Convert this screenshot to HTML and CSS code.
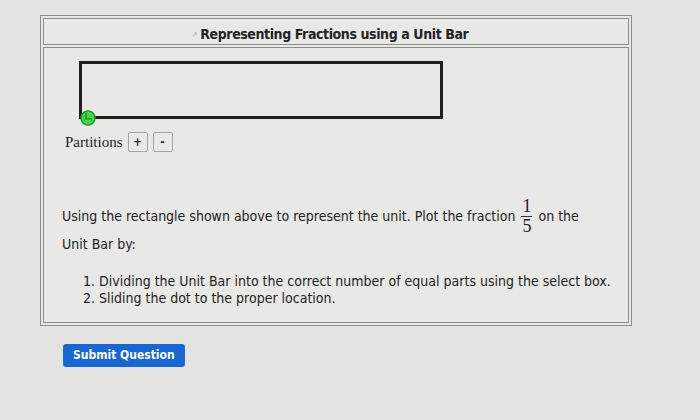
FILE: index.html
```html
<!DOCTYPE html>
<html>
<head>
<meta charset="utf-8">
<link rel="stylesheet" href="styles.css">
</head>
<body>
<div class="page">
  <div class="frame">
    <div class="head"><span class="mark">&#8599;</span>Representing Fractions using a Unit Bar</div>
    <div class="panel">
      <svg class="unitbar" width="380" height="70" viewBox="0 0 380 70">
        <rect x="1.5" y="1.5" width="361" height="55" fill="none" stroke="#1e1e1e" stroke-width="3"/>
        <circle cx="9" cy="57" r="7" fill="#3fd64a" stroke="#23962b" stroke-width="1.5"/>
        <path d="M7 52 L7 58 L13 58" fill="none" stroke="#1f7a25" stroke-width="1.2"/>
      </svg>
      <div class="partitions">
        <span class="plabel">Partitions</span>
        <span class="pbtn">+</span>
        <span class="pbtn">-</span>
      </div>
      <p class="prompt"><span class="line1">Using the rectangle shown above to represent the unit. Plot the fraction <span class="frac"><span class="num">1</span><span class="den">5</span></span> on the</span><span class="line2">Unit Bar by:</span></p>
      <ol class="steps">
        <li>Dividing the Unit Bar into the correct number of equal parts using the select box.</li>
        <li>Sliding the dot to the proper location.</li>
      </ol>
    </div>
  </div>
  <div class="actions">
    <span class="submit">Submit Question</span>
  </div>
</div>
</body>
</html>
```
FILE: styles.css
```css
html, body {
  margin: 0;
  padding: 0;
}
body {
  background: #e3e3e1;
  width: 700px;
  height: 420px;
  overflow: hidden;
  font-family: "DejaVu Sans Condensed", "DejaVu Sans", sans-serif;
  color: #232323;
}
.page {
  padding: 15px 0 0 40px;
}
.frame {
  width: 586px;
  border: 1px solid #8d8d8d;
  padding: 2px;
  display: flex;
  flex-direction: column;
  gap: 2px;
  background: #e8e8e6;
}
.head {
  height: 27px;
  border: 1px solid #8d8d8d;
  display: flex;
  align-items: center;
  justify-content: center;
  font-weight: bold;
  font-size: 14px;
  letter-spacing: -0.4px;
  padding-top: 5px;
  padding-right: 12px;
  box-sizing: border-box;
}
.mark {
  color: #b0b0b0;
  font-weight: normal;
  font-size: 8px;
  margin-right: 3px;
}
.panel {
  height: 276px;
  border: 1px solid #8d8d8d;
  padding: 13px 4px 0 18px;
  box-sizing: border-box;
}
.unitbar {
  display: block;
  margin-left: 17px;
}
.partitions {
  display: flex;
  align-items: center;
  gap: 5px;
  margin-top: 1px;
  margin-left: 3px;
}
.plabel {
  font-family: "Liberation Serif", serif;
  font-size: 15px;
}
.pbtn {
  width: 18px;
  height: 18px;
  border: 1px solid #a4a4a4;
  border-radius: 2px;
  background: #e9e9e9;
  display: flex;
  align-items: center;
  justify-content: center;
  font-size: 12px;
  font-weight: bold;
  color: #333;
}
.prompt {
  margin: 47px 0 0 0;
  font-size: 14px;
  display: flex;
  flex-direction: column;
}
.line1 {
  display: flex;
  align-items: center;
  height: 34px;
}
.line2 {
  line-height: 20px;
  margin-top: 1px;
}
.frac {
  display: inline-flex;
  flex-direction: column;
  align-items: center;
  font-family: "Liberation Serif", serif;
  font-size: 18px;
  line-height: 17px;
  margin: 0 6px 0 6px;
}
.num {
  border-bottom: 1px solid #333;
  padding: 0 1px 1px;
}
.den {
  padding-top: 1px;
}
.steps {
  margin: 19px 0 0 0;
  padding-left: 37px;
  font-size: 14px;
  line-height: 17px;
  white-space: nowrap;
}
.actions {
  padding: 18px 0 0 23px;
}
.submit {
  display: inline-block;
  background: #1766d1;
  color: #fff;
  font-weight: bold;
  font-size: 12px;
  padding: 4px 10px 4px;
  border-radius: 3px;
  line-height: 15px;
}
```
